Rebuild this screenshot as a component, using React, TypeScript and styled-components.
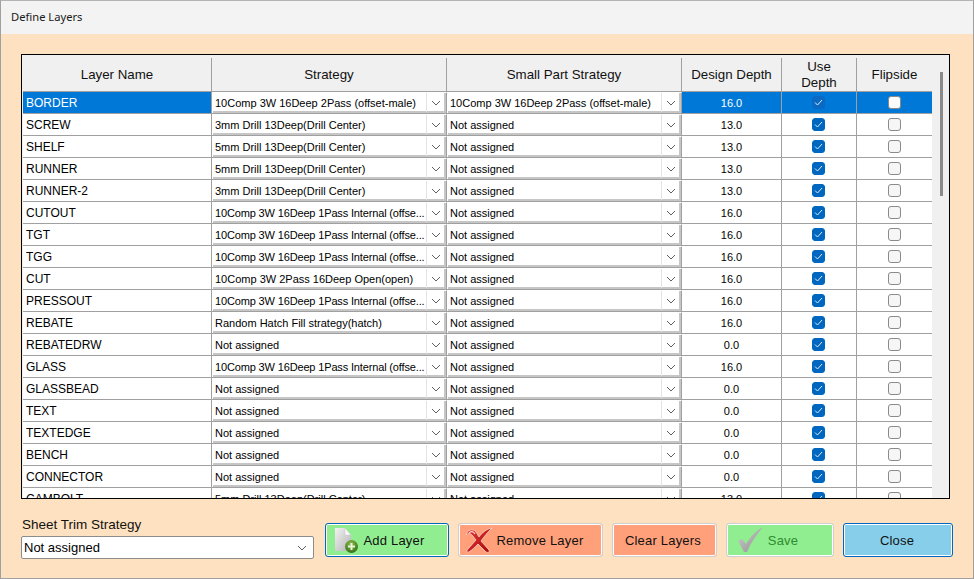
import { createGlobalStyle, styled } from "styled-components";

const GlobalStyle = createGlobalStyle`
  html, body {
    margin: 0;
    padding: 0;
    background: #fee1c0;
  }
  * {
    box-sizing: border-box;
  }
`;

const uiFont = `"Liberation Sans", Arial, sans-serif`;
const columns = "189px 235px 235px 100px 75px 75px";

const Window = styled.div`
  width: 974px;
  height: 579px;
  display: flex;
  flex-direction: column;
  border: 1px solid #a0a0a0;
  border-top-color: #b4b4b4;
  background: #fee1c0;
  font-family: ${uiFont};
  color: #000;
`;

const TitleBar = styled.div`
  height: 33px;
  flex: none;
  padding: 0 0 2px 10px;
  display: flex;
  align-items: center;
  background: #f3f3f3;
  font-family: "Noto Sans", sans-serif;
  font-size: 11.2px;
  color: #1a1a1a;
`;

const Body = styled.div`
  flex: 1;
  padding: 20px 23px 0 20px;
  display: flex;
  flex-direction: column;
`;

const Grid = styled.div`
  height: 445px;
  flex: none;
  display: flex;
  border: 1px solid #000;
  background: #f0f0f0;
  overflow: hidden;
`;

const GridMain = styled.div`
  width: 910px;
  padding-left: 1px;
  flex: none;
  overflow: hidden;
`;

const HeaderRow = styled.div`
  display: grid;
  grid-template-columns: ${columns};
  height: 37px;
  padding-top: 3px;
  background: #f0f0f0;
  border-bottom: 1px solid #a0a0a0;
`;

const HeaderCell = styled.div`
  display: flex;
  align-items: center;
  justify-content: center;
  text-align: center;
  font-size: 13.3px;
  line-height: 16px;
  color: #111;
  border-right: 1px solid #a0a0a0;

  &:last-child {
    border-right: none;
  }
`;

const Row = styled.div<{ $selected?: boolean }>`
  display: grid;
  grid-template-columns: ${columns};
  height: 22px;
  border-bottom: 1px solid #a0a0a0;
  background: ${(p) => (p.$selected ? "#0078d7" : "#fff")};
  color: ${(p) => (p.$selected ? "#fff" : "#000")};
`;

const NameCell = styled.div`
  display: flex;
  align-items: center;
  padding-left: 3px;
  font-size: 12px;
  border-right: 1px solid #a0a0a0;
`;

const DepthCell = styled.div`
  display: flex;
  align-items: center;
  justify-content: center;
  font-size: 11px;
  border-right: 1px solid #a0a0a0;
`;

const CheckCell = styled.div`
  display: flex;
  align-items: center;
  justify-content: center;
  padding-right: 1px;
  border-right: 1px solid #a0a0a0;

  &:last-child {
    border-right: none;
  }
`;

const ComboCell = styled.div`
  display: flex;
  height: 21px;
  background: #fff;
  color: #000;
  border-top: 1px solid #fff;
  border-left: 1px solid #fff;
  border-right: 1px solid #a0a0a0;
  box-shadow: inset 0 -2px 0 #c6c6c6, inset -2px 0 0 #c6c6c6;
`;

const ComboText = styled.div<{ $tight?: boolean }>`
  flex: 1;
  min-width: 0;
  padding-left: 2px;
  font-size: 11px;
  line-height: 21px;
  height: 19px;
  letter-spacing: ${(p) => (p.$tight ? "-0.15px" : "0")};
  white-space: nowrap;
`;

const ComboArrow = styled.div`
  width: 18px;
  height: 19px;
  flex: none;
  margin-right: 2px;
  display: flex;
  align-items: center;
  justify-content: center;
  border-left: 1px solid #e3e3e3;
`;

const CheckBox = styled.div<{ $checked?: boolean; $selected?: boolean }>`
  width: 13px;
  height: 13px;
  border-radius: 3px;
  display: flex;
  align-items: center;
  justify-content: center;
  background: ${(p) => (p.$checked ? (p.$selected ? "#0a69c2" : "#0067c0") : p.$selected ? "#fcfcfc" : "#f6f6f6")};
  border: 1px solid ${(p) => (p.$checked ? (p.$selected ? "#0a69c2" : "#0067c0") : "#8a8a8a")};
`;

const ScrollTrack = styled.div`
  flex: 1;
  position: relative;
  background: #f0f0f0;
`;

const ScrollThumb = styled.div`
  position: absolute;
  left: 8px;
  top: 17px;
  width: 3px;
  height: 124px;
  background: #8a8a8a;
`;

const Footer = styled.div`
  display: flex;
  align-items: flex-start;
  margin-top: 24px;
`;

const TrimGroup = styled.div`
  width: 293px;
  flex: none;
  margin-top: -6px;
  margin-right: 11px;
`;

const TrimLabel = styled.div`
  font-size: 13.5px;
  line-height: 15px;
  color: #111;
  padding-left: 1px;
  margin-bottom: 4px;
`;

const TrimSelect = styled.div`
  height: 23px;
  display: flex;
  align-items: center;
  justify-content: space-between;
  padding: 0 6px 0 2px;
  background: #fff;
  border: 1px solid #8c8c8c;
  border-radius: 2px;
  font-size: 13px;
`;

const Buttons = styled.div`
  display: flex;
  gap: 9px;
`;

const ActionButton = styled.div<{ $bg: string; $width: number; $focus?: boolean; $disabled?: boolean }>`
  width: ${(p) => p.$width}px;
  height: 34px;
  display: flex;
  align-items: center;
  justify-content: center;
  position: relative;
  font-size: 13px;
  color: ${(p) => (p.$disabled ? "#2e8b2e" : "#111")};
  background: ${(p) => p.$bg};
  border: 1px solid ${(p) => (p.$focus ? "#0067c0" : "#d0d0d0")};
  border-radius: 3px;
  box-shadow: inset 0 0 0 1px #fff;
  padding: 2px;
`;

const ButtonIcon = styled.svg<{ $left: number }>`
  position: absolute;
  left: ${(p) => p.$left}px;
  top: 3px;
`;

const ButtonLabel = styled.span<{ $shift: number }>`
  margin-left: ${(p) => p.$shift}px;
  letter-spacing: 0.2px;
`;

function Chevron() {
  return (
    <svg width="10" height="6" viewBox="0 0 10 6">
      <path d="M1 1 L5 5 L9 1" fill="none" stroke="#606060" strokeWidth="1" />
    </svg>
  );
}

function AddIcon() {
  return (
    <ButtonIcon $left={9} width="24" height="27" viewBox="0 0 24 27">
      <defs>
        <linearGradient id="page" x1="0" y1="0" x2="1" y2="1">
          <stop offset="0" stopColor="#f2f2f2" />
          <stop offset="1" stopColor="#b4b4b4" />
        </linearGradient>
        <radialGradient id="ball" cx="0.45" cy="0.3" r="0.75">
          <stop offset="0" stopColor="#8dbb4a" />
          <stop offset="1" stopColor="#2f6a12" />
        </radialGradient>
      </defs>
      <path d="M0 1 H10 L16 8 V24 H0 Z" fill="url(#page)" />
      <path d="M10 1 L16 8 H10 Z" fill="#fafafa" stroke="#c4c4c4" strokeWidth="0.5" />
      <circle cx="16.5" cy="19.5" r="6.5" fill="url(#ball)" />
      <path d="M16.5 16 V23 M13 19.5 H20" stroke="#e8f4dc" strokeWidth="2" />
    </ButtonIcon>
  );
}

function RemoveIcon() {
  return (
    <ButtonIcon $left={6} width="28" height="26" viewBox="0 0 28 26">
      <defs>
        <linearGradient id="cross" x1="0" y1="0" x2="1" y2="1">
          <stop offset="0" stopColor="#e63a3a" />
          <stop offset="1" stopColor="#a80808" />
        </linearGradient>
      </defs>
      <path
        d="M1 8 C2 3 8 1 11 5 L14 10 C17 6 21 2 27 1 C22 6 18 11 16 14 L24 23 C25 25 23 26 21 25 L13 17 C10 20 7 23 4 25 C2 26 1 24 3 22 L11 13 L7 8 C5 6 3 6 1 8 Z"
        fill="url(#cross)"
        stroke="#f6d8cc"
        strokeWidth="0.8"
      />
      <path d="M4 6 C6 4 8 4 10 7" fill="none" stroke="#ffd4d4" strokeWidth="1.2" />
    </ButtonIcon>
  );
}

function SaveIcon() {
  return (
    <ButtonIcon $left={10} width="27" height="26" viewBox="0 0 27 26">
      <defs>
        <linearGradient id="tick" x1="0" y1="0" x2="1" y2="1">
          <stop offset="0" stopColor="#cfcfcf" />
          <stop offset="1" stopColor="#8e8e8e" />
        </linearGradient>
      </defs>
      <path
        d="M1 14 L5 12 L9 17 C13 10 19 4 26 0 C20 7 14 15 10 25 L7 25 C5 21 3 17 1 14 Z"
        fill="url(#tick)"
      />
    </ButtonIcon>
  );
}

type LayerRow = { name: string; strategy: string; small?: string; depth: string };

const na = "Not assigned";
const internal = "10Comp 3W 16Deep 1Pass Internal (offse...";
const layers: LayerRow[] = [
  { name: "BORDER", strategy: "10Comp 3W 16Deep 2Pass (offset-male)", small: "10Comp 3W 16Deep 2Pass (offset-male)", depth: "16.0" },
  { name: "SCREW", strategy: "3mm Drill 13Deep(Drill Center)", depth: "13.0" },
  { name: "SHELF", strategy: "5mm Drill 13Deep(Drill Center)", depth: "13.0" },
  { name: "RUNNER", strategy: "5mm Drill 13Deep(Drill Center)", depth: "13.0" },
  { name: "RUNNER-2", strategy: "3mm Drill 13Deep(Drill Center)", depth: "13.0" },
  { name: "CUTOUT", strategy: internal, depth: "16.0" },
  { name: "TGT", strategy: internal, depth: "16.0" },
  { name: "TGG", strategy: internal, depth: "16.0" },
  { name: "CUT", strategy: "10Comp 3W 2Pass 16Deep Open(open)", depth: "16.0" },
  { name: "PRESSOUT", strategy: internal, depth: "16.0" },
  { name: "REBATE", strategy: "Random Hatch Fill strategy(hatch)", depth: "16.0" },
  { name: "REBATEDRW", strategy: na, depth: "0.0" },
  { name: "GLASS", strategy: internal, depth: "16.0" },
  { name: "GLASSBEAD", strategy: na, depth: "0.0" },
  { name: "TEXT", strategy: na, depth: "0.0" },
  { name: "TEXTEDGE", strategy: na, depth: "0.0" },
  { name: "BENCH", strategy: na, depth: "0.0" },
  { name: "CONNECTOR", strategy: na, depth: "0.0" },
  { name: "CAMBOLT", strategy: "5mm Drill 13Deep(Drill Center)", depth: "13.0" },
];

function Combo({ value }: { value: string }) {
  return (
    <ComboCell>
      <ComboText $tight={value === internal}>{value}</ComboText>
      <ComboArrow>
        <Chevron />
      </ComboArrow>
    </ComboCell>
  );
}

export default function App() {
  return (
    <>
      <GlobalStyle />
      <Window>
        <TitleBar>Define Layers</TitleBar>
        <Body>
          <Grid>
            <GridMain>
              <HeaderRow>
                <HeaderCell>Layer Name</HeaderCell>
                <HeaderCell>Strategy</HeaderCell>
                <HeaderCell>Small Part Strategy</HeaderCell>
                <HeaderCell>Design Depth</HeaderCell>
                <HeaderCell>
                  Use
                  <br />
                  Depth
                </HeaderCell>
                <HeaderCell>Flipside</HeaderCell>
              </HeaderRow>
              {layers.map((layer, i) => (
                <Row key={layer.name} $selected={i === 0}>
                  <NameCell>{layer.name}</NameCell>
                  <Combo value={layer.strategy} />
                  <Combo value={layer.small ?? na} />
                  <DepthCell>{layer.depth}</DepthCell>
                  <CheckCell>
                    <CheckBox $checked $selected={i === 0}>
                      <svg width="9" height="7" viewBox="0 0 9 7">
                        <path d="M1 3.5 L3.5 6 L8 1" fill="none" stroke="#dce9f6" strokeWidth="1" />
                      </svg>
                    </CheckBox>
                  </CheckCell>
                  <CheckCell>
                    <CheckBox $selected={i === 0} />
                  </CheckCell>
                </Row>
              ))}
            </GridMain>
            <ScrollTrack>
              <ScrollThumb />
            </ScrollTrack>
          </Grid>
          <Footer>
            <TrimGroup>
              <TrimLabel>Sheet Trim Strategy</TrimLabel>
              <TrimSelect>
                {na}
                <Chevron />
              </TrimSelect>
            </TrimGroup>
            <Buttons>
              <ActionButton $bg="#90ee90" $width={124} $focus>
                <AddIcon />
                <ButtonLabel $shift={14}>Add Layer</ButtonLabel>
              </ActionButton>
              <ActionButton $bg="#ffa07a" $width={145}>
                <RemoveIcon />
                <ButtonLabel $shift={19}>Remove Layer</ButtonLabel>
              </ActionButton>
              <ActionButton $bg="#ffa07a" $width={105}>
                <ButtonLabel $shift={-3}>Clear Layers</ButtonLabel>
              </ActionButton>
              <ActionButton $bg="#90ee90" $width={108} $disabled>
                <SaveIcon />
                <ButtonLabel $shift={6}>Save</ButtonLabel>
              </ActionButton>
              <ActionButton $bg="#87ceeb" $width={110} $focus>
                <ButtonLabel $shift={-2}>Close</ButtonLabel>
              </ActionButton>
            </Buttons>
          </Footer>
        </Body>
      </Window>
    </>
  );
}
